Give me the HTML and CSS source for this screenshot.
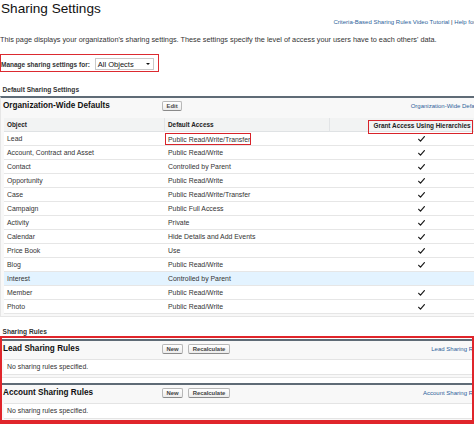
FILE: index.html
```html
<!DOCTYPE html>
<html lang="en">
<head>
<meta charset="utf-8">
<title>Sharing Settings</title>
<link rel="stylesheet" href="styles.css">
</head>
<body>
<div class="sheet">
  <h1 class="title">Sharing Settings</h1>
  <div class="help-row"><a class="link">Criteria-Based Sharing Rules Video Tutorial</a> | <a class="link">Help for this Page</a><span class="help-icon">?</span></div>
  <p class="intro">This page displays your organization's sharing settings. These settings specify the level of access your users have to each others' data.</p>
  <div class="manage">
    <span class="manage-label">Manage sharing settings for:</span>
    <div class="select"><span>All Objects</span><span class="caret"></span></div>
  </div>

  <div class="section-label first">Default Sharing Settings</div>
  <section class="panel">
    <div class="panel-head">
      <h2 class="panel-title">Organization-Wide Defaults</h2>
      <div class="btns"><button class="btn">Edit</button></div>
      <a class="link help-link">Organization-Wide Defaults Help<span class="help-icon">?</span></a>
    </div>
    <table class="list">
      <colgroup><col class="c1"><col class="c2"><col class="c3"></colgroup>
      <thead>
        <tr><th>Object</th><th>Default Access</th><th class="center"><span class="mark-h">Grant Access Using Hierarchies</span></th></tr>
      </thead>
      <tbody>
        <tr><td>Lead</td><td><span class="mark">Public Read/Write/Transfer</span></td><td class="center"><svg class="check" viewBox="0 0 7 6"><path d="M0.7 3.3 L2.5 5.2 L6.4 0.6"/></svg></td></tr>
        <tr><td>Account, Contract and Asset</td><td>Public Read/Write</td><td class="center"><svg class="check" viewBox="0 0 7 6"><path d="M0.7 3.3 L2.5 5.2 L6.4 0.6"/></svg></td></tr>
        <tr><td>Contact</td><td>Controlled by Parent</td><td class="center"><svg class="check" viewBox="0 0 7 6"><path d="M0.7 3.3 L2.5 5.2 L6.4 0.6"/></svg></td></tr>
        <tr><td>Opportunity</td><td>Public Read/Write</td><td class="center"><svg class="check" viewBox="0 0 7 6"><path d="M0.7 3.3 L2.5 5.2 L6.4 0.6"/></svg></td></tr>
        <tr><td>Case</td><td>Public Read/Write/Transfer</td><td class="center"><svg class="check" viewBox="0 0 7 6"><path d="M0.7 3.3 L2.5 5.2 L6.4 0.6"/></svg></td></tr>
        <tr><td>Campaign</td><td>Public Full Access</td><td class="center"><svg class="check" viewBox="0 0 7 6"><path d="M0.7 3.3 L2.5 5.2 L6.4 0.6"/></svg></td></tr>
        <tr><td>Activity</td><td>Private</td><td class="center"><svg class="check" viewBox="0 0 7 6"><path d="M0.7 3.3 L2.5 5.2 L6.4 0.6"/></svg></td></tr>
        <tr><td>Calendar</td><td>Hide Details and Add Events</td><td class="center"><svg class="check" viewBox="0 0 7 6"><path d="M0.7 3.3 L2.5 5.2 L6.4 0.6"/></svg></td></tr>
        <tr><td>Price Book</td><td>Use</td><td class="center"><svg class="check" viewBox="0 0 7 6"><path d="M0.7 3.3 L2.5 5.2 L6.4 0.6"/></svg></td></tr>
        <tr><td>Blog</td><td>Public Read/Write</td><td class="center"><svg class="check" viewBox="0 0 7 6"><path d="M0.7 3.3 L2.5 5.2 L6.4 0.6"/></svg></td></tr>
        <tr class="hover"><td>Interest</td><td>Controlled by Parent</td><td class="center"></td></tr>
        <tr><td>Member</td><td>Public Read/Write</td><td class="center"><svg class="check" viewBox="0 0 7 6"><path d="M0.7 3.3 L2.5 5.2 L6.4 0.6"/></svg></td></tr>
        <tr><td>Photo</td><td>Public Read/Write</td><td class="center"><svg class="check" viewBox="0 0 7 6"><path d="M0.7 3.3 L2.5 5.2 L6.4 0.6"/></svg></td></tr>
      </tbody>
    </table>
  </section>

  <div class="section-label">Sharing Rules</div>
  <div class="rules">
    <section class="panel rule-panel">
      <div class="panel-head">
        <h2 class="panel-title">Lead Sharing Rules</h2>
        <div class="btns"><button class="btn">New</button><button class="btn">Recalculate</button></div>
        <a class="link help-link">Lead Sharing Rules Help<span class="help-icon">?</span></a>
      </div>
      <div class="rule-body">No sharing rules specified.</div>
    </section>
    <section class="panel rule-panel">
      <div class="panel-head">
        <h2 class="panel-title">Account Sharing Rules</h2>
        <div class="btns"><button class="btn">New</button><button class="btn">Recalculate</button></div>
        <a class="link help-link">Account Sharing Rules Help<span class="help-icon">?</span></a>
      </div>
      <div class="rule-body">No sharing rules specified.</div>
    </section>
  </div>
</div>
</body>
</html>
```

FILE: styles.css
```css
html, body {
  margin: 0;
  padding: 0;
  overflow: hidden;
  background: #fff;
}
body {
  width: 474px;
  height: 424px;
  font-family: "Liberation Sans", Arial, sans-serif;
  color: #333;
}
.sheet {
  width: 518px;
}
.title {
  margin: 0;
  padding-left: 1px;
  font-size: 13.6px;
  line-height: 17px;
  font-weight: normal;
  color: #111;
}
.help-row {
  margin-top: 1px;
  height: 8px;
  line-height: 8px;
  font-size: 6px;
  text-align: right;
  padding-right: 5px;
  white-space: nowrap;
  color: #333;
}
.link {
  color: #2d5f9a;
  text-decoration: none;
}
.help-icon {
  display: inline-block;
  width: 8px;
  height: 8px;
  margin-left: 3px;
  border-radius: 50%;
  background: #e9a23b;
  color: #fff;
  font-size: 6px;
  line-height: 8px;
  font-weight: bold;
  text-align: center;
  vertical-align: middle;
}
.intro {
  margin: 9px 0 0;
  font-size: 7.3px;
  line-height: 9px;
  color: #333;
  white-space: nowrap;
}
.manage {
  margin-top: 10px;
  display: flex;
  width: max-content;
  align-items: center;
  gap: 5px;
  height: 18px;
  box-sizing: border-box;
  border: 1.5px solid #dc2a30;
  padding: 2px 4.5px 0 0;
}
.manage-label {
  font-size: 6.5px;
  font-weight: bold;
  color: #333;
}
.select {
  display: flex;
  align-items: center;
  justify-content: space-between;
  width: 59px;
  height: 12.5px;
  box-sizing: border-box;
  border: 1px solid #c9c9c9;
  padding: 0 2.5px 0 2px;
  background: #fff;
  font-size: 7.5px;
  color: #111;
}
.caret {
  width: 0;
  height: 0;
  border-left: 2px solid transparent;
  border-right: 2px solid transparent;
  border-top: 2.5px solid #111;
}
.section-label {
  margin-top: 10px;
  padding-left: 2.5px;
  font-size: 6.6px;
  line-height: 9px;
  font-weight: bold;
  color: #333;
}
.section-label.first {
  margin-top: 13px;
}
.panel {
  margin-top: 2px;
  background: #f8f8f8;
  border: 1px solid #e6e6e6;
  border-top: 2px solid #5f6b76;
  padding: 0 3px 2px 3px;
}
.panel-head {
  display: grid;
  grid-template-columns: 159px auto 1fr;
  align-items: center;
  height: 18px;
  box-sizing: border-box;
  padding: 0 5px 2px 0;
  margin-left: -1px;
}
.panel-title {
  margin: 0;
  font-size: 8.2px;
  line-height: 10px;
  font-weight: bold;
  color: #111;
  white-space: nowrap;
}
.btns {
  display: flex;
  gap: 5px;
}
.btn {
  font-family: "Liberation Sans", Arial, sans-serif;
  font-size: 5.9px;
  font-weight: bold;
  color: #444;
  height: 10.5px;
  line-height: 8px;
  padding: 0 3.5px;
  border: 1px solid #b8b8b8;
  border-bottom-color: #8a8a8a;
  border-radius: 2px;
  background: linear-gradient(#ffffff, #ececec);
}
.help-link {
  justify-self: end;
  font-size: 6px;
  white-space: nowrap;
}
.list {
  width: 100%;
  margin-top: 2px;
  table-layout: fixed;
  border-collapse: separate;
  border-spacing: 0;
  background: #fff;
}
.c1 { width: 160px; }
.c2 { width: 165px; }
.list th,
.list td {
  box-sizing: border-box;
  height: 14px;
  padding: 0 3px;
  text-align: left;
  white-space: nowrap;
  border-bottom: 1px solid #e6e6e6;
}
.list th {
  background: #f2f3f3;
  font-size: 6.4px;
  font-weight: bold;
  color: #222;
  border-bottom-color: #dfe2e4;
}
.list th + th {
  border-left: 1px solid #e2e4e6;
}
.list td {
  font-size: 6.9px;
  color: #333;
  line-height: 13px;
}
.list td:nth-child(2) {
  padding-left: 4px;
}
.list .center {
  text-align: center;
}
.list tr.hover td {
  background: #e3f3ff;
}
.check {
  width: 7px;
  height: 6px;
  vertical-align: middle;
  fill: none;
  stroke: #1a1a1a;
  stroke-width: 1.2;
  stroke-linecap: round;
  stroke-linejoin: round;
}
.mark {
  padding: 1.5px 0 1.5px 1.6px;
  margin-left: -1.6px;
  outline: 1.5px solid #d8232a;
}
.mark-h {
  padding: 0.5px 1px 4.5px 4px;
  margin: 0 -1px 0 -4px;
  outline: 1.5px solid #d8232a;
}
.rules {
  position: relative;
  padding-top: 3px;
}
.rules::after {
  content: "";
  position: absolute;
  left: 0;
  top: 0;
  width: 474px;
  height: 88px;
  box-sizing: border-box;
  border: 2.5px solid #e0252b;
  border-bottom-width: 4px;
  pointer-events: none;
}
.rule-panel {
  margin-top: 0;
  margin-bottom: 5px;
}
.rule-body {
  height: 16px;
  box-sizing: border-box;
  line-height: 14px;
  padding-left: 3px;
  background: #fff;
  border-top: 1px solid #e4e4e4;
  border-bottom: 1px solid #e4e4e4;
  font-size: 6.9px;
  color: #333;
}
```
